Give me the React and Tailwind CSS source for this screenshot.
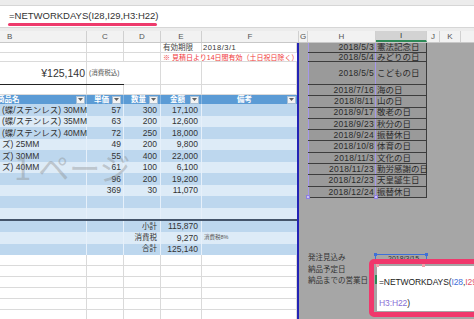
import React from 'react';

const font = "font-['Liberation_Sans','Noto_Sans_CJK_JP',sans-serif]";

const items = [
  ['(蝶/ステンレス) 30MM', '57', '300', '17,100'],
  ['(蝶/ステンレス) 35MM', '63', '200', '12,600'],
  ['(蝶/ステンレス) 40MM', '72', '250', '18,000'],
  ['ズ) 25MM', '49', '200', '9,800'],
  ['ズ) 30MM', '55', '400', '22,000'],
  ['ズ) 40MM', '61', '100', '6,100'],
  ['', '96', '200', '19,200'],
  ['', '369', '30', '11,070'],
  ['', '', '', ''],
  ['', '', '', ''],
];

const holidays = [
  ['2018/7/16', '海の日'],
  ['2018/8/11', '山の日'],
  ['2018/9/17', '敬老の日'],
  ['2018/9/23', '秋分の日'],
  ['2018/9/24', '振替休日'],
  ['2018/10/8', '体育の日'],
  ['2018/11/3', '文化の日'],
  ['2018/11/23', '勤労感謝の日'],
  ['2018/12/23', '天皇誕生日'],
  ['2018/12/24', '振替休日'],
];

function Drop() {
  return (
    <span className="flex h-[8px] w-[9px] shrink-0 items-center justify-center border border-[#a9bfd4] bg-[#f3f3f3]">
      <svg width="5" height="3" viewBox="0 0 5 3">
        <path d="M0 0h5L2.5 3z" fill="#606060" />
      </svg>
    </span>
  );
}

function GridRow({ h, children }) {
  return <div className={`flex ${h}`}>{children}</div>;
}

function Cell({ w, className = '', children }) {
  return (
    <div className={`${w} shrink-0 border-r border-b border-[#dadada] ${className}`}>{children}</div>
  );
}

function HeadCell({ w, label, className = '' }) {
  return (
    <div className={`${w} shrink-0 flex items-center justify-center border-r border-[#d0d0d0] ${className}`}>
      {label}
    </div>
  );
}

export default function App() {
  return (
    <div className={`w-[474px] h-[319px] overflow-hidden bg-white text-[#333] ${font}`}>
      {/* formula bar */}
      <div className="h-[31px] bg-[#ececec] pt-[5px]">
        <div className="h-[23px] bg-white border-y border-[#d6d6d6] pl-[9px] pt-[4px]">
          <div className="text-[9.5px] leading-[12px] text-[#333]">=NETWORKDAYS(I28,I29,H3:H22)</div>
          <div className="mt-[1px] -ml-[1px] h-[3px] w-[149px] rounded-full bg-[#ee3a6c]" />
        </div>
      </div>

      {/* column headers */}
      <div className="flex h-[12px] bg-[#f2f2f2] border-b border-[#c8c8c8] text-[8px] text-[#555]">
        <div className="w-[87px] shrink-0 pl-[7px] flex items-center border-r border-[#d0d0d0]">B</div>
        <HeadCell w="w-[37px]" label="C" />
        <HeadCell w="w-[37px]" label="D" />
        <HeadCell w="w-[41px]" label="E" />
        <HeadCell w="w-[97px]" label="F" />
        <HeadCell w="w-[9px]" label="G" />
        <HeadCell w="w-[68px]" label="H" />
        <HeadCell w="w-[51px]" label="I" className="bg-[#d3d3d3] text-[#333] border-b-2 border-b-[#2e8a57]" />
        <HeadCell w="w-[13px]" label="J" />
        <HeadCell w="w-[21px]" label="K" />
        <div className="flex-1" />
      </div>

      <div className="flex">
        {/* left printable sheet */}
        <div className="relative w-[297px] shrink-0 text-[8.5px] leading-none">
          <GridRow h="h-[10px]">
            <Cell w="w-[87px]" />
            <Cell w="w-[37px]" />
            <Cell w="w-[37px]" />
            <Cell w="w-[41px]" className="pl-[2px] pt-[1px] text-[7.5px] text-[#444]">有効期限</Cell>
            <Cell w="w-[95px]" className="pl-[1px] pt-[1px] text-[7.5px] tracking-[0.5px]">2018/3/1</Cell>
          </GridRow>
          <GridRow h="h-[9px]">
            <Cell w="w-[87px]" />
            <Cell w="w-[37px]" />
            <Cell w="w-[37px]" />
            <div className="w-[136px] shrink-0 border-b border-[#dadada] pl-[2px] text-[7px] leading-[9px] whitespace-nowrap text-[#f03a3a]">
              ※ 見積日より14日間有効（土日祝日除く）
            </div>
          </GridRow>
          <GridRow h="h-[23px]">
            <div className="w-[124px] shrink-0 flex border-b-[1.5px] border-[#222]">
              <div className="w-[87px] shrink-0 border-r border-[#dadada] flex items-center justify-end pr-[1px] text-[10.5px]">
                ¥125,140
              </div>
              <div className="flex items-center pl-[2px] text-[6.5px] whitespace-nowrap text-[#555]">(消費税込)</div>
            </div>
            <Cell w="w-[37px]" />
            <Cell w="w-[41px]" />
            <Cell w="w-[95px]" />
          </GridRow>
          <GridRow h="h-[10px]">
            <Cell w="w-[87px]" />
            <Cell w="w-[37px]" />
            <Cell w="w-[37px]" />
            <Cell w="w-[41px]" />
            <Cell w="w-[95px]" />
          </GridRow>

          {/* table header */}
          <div className="flex h-[9px] bg-[#5b9bd5] text-[7.5px] font-bold text-white">
            <div className="w-[87px] shrink-0 flex items-center pr-[1px] border-r border-[#8ab8e2] overflow-hidden">
              <span className="-ml-[3px]">商品名</span>
              <span className="ml-auto"><Drop /></span>
            </div>
            <div className="w-[37px] shrink-0 flex items-center justify-end gap-[3px] pr-[2px] border-r border-[#8ab8e2]">
              <span>単価</span>
              <Drop />
            </div>
            <div className="w-[37px] shrink-0 flex items-center justify-end gap-[3px] pr-[2px] border-r border-[#8ab8e2]">
              <span>数量</span>
              <Drop />
            </div>
            <div className="w-[41px] shrink-0 flex items-center justify-end gap-[5px] pr-[2px] border-r border-[#8ab8e2]">
              <span>金額</span>
              <Drop />
            </div>
            <div className="w-[95px] shrink-0 flex items-center pr-[1px]">
              <span className="flex-1 text-center">備考</span>
              <Drop />
            </div>
          </div>

          {items.map((r, i) => (
            <div
              key={i}
              className={`flex h-[11.5px] items-center ${i % 2 === 0 ? 'bg-[#bdd7ee]' : 'bg-[#ddebf7]'}`}
            >
              <div className="w-[87px] shrink-0 h-full flex items-center pl-[2px] whitespace-nowrap border-r border-[#e6f0fa]">
                {r[0]}
              </div>
              <div className="w-[37px] shrink-0 h-full flex items-center justify-end pr-[2px] border-r border-[#e6f0fa]">
                {r[1]}
              </div>
              <div className="w-[37px] shrink-0 h-full flex items-center justify-end pr-[3px] border-r border-[#e6f0fa]">
                {r[2]}
              </div>
              <div className="w-[41px] shrink-0 h-full flex items-center justify-end pr-[3px] border-r border-[#e6f0fa]">
                {r[3]}
              </div>
              <div className="w-[95px] shrink-0 h-full" />
            </div>
          ))}

          <div className="h-[2px] bg-[#44546a]" />

          {[
            ['小計', '115,870', '', 'bg-[#bdd7ee]'],
            ['消費税', '9,270', '消費税8%', 'bg-[#ddebf7]'],
            ['合計', '125,140', '', 'bg-[#bdd7ee]'],
          ].map((r, i) => (
            <div key={i} className={`flex h-[11.3px] items-center ${r[3]}`}>
              <div className="w-[87px] shrink-0 h-full border-r border-[#e6f0fa]" />
              <div className="w-[37px] shrink-0 h-full border-r border-[#e6f0fa]" />
              <div className="w-[37px] shrink-0 h-full flex items-center justify-end pr-[3px] text-[7.5px] border-r border-[#e6f0fa]">
                {r[0]}
              </div>
              <div className="w-[41px] shrink-0 h-full flex items-center justify-end pr-[3px] border-r border-[#e6f0fa]">
                {r[1]}
              </div>
              <div className="w-[95px] shrink-0 h-full flex items-center pl-[2px] text-[5.5px] text-[#555]">{r[2]}</div>
            </div>
          ))}

          {[0, 1, 2, 3, 4, 5].map((i) => (
            <GridRow key={i} h="h-[11px]">
              <Cell w="w-[87px]" />
              <Cell w="w-[37px]" />
              <Cell w="w-[37px]" />
              <Cell w="w-[41px]" />
              <Cell w="w-[95px]" />
            </GridRow>
          ))}

          {/* page watermark */}
          <div className="pointer-events-none absolute left-[14px] top-[108px] whitespace-nowrap text-[31px] leading-none text-[#8a8a8a]/40 font-['Noto_Sans_CJK_JP',sans-serif]">
            1 ページ
          </div>
        </div>

        {/* page break line */}
        <div className="w-[2px] shrink-0 bg-[#2323b5]" />

        {/* non-printing area */}
        <div className="relative flex-1 h-[276px] bg-[#a6a6a6] text-[8.5px] leading-none text-[#2a2a2a]">
          <div className="flex">
            <div className="w-[9px] shrink-0" />
            <div className="w-[119px] shrink-0 bg-[#9a9a9a]">
              {[
                ['2018/5/3', '憲法記念日', 'h-[10px]'],
                ['2018/5/4', 'みどりの日', 'h-[9px]'],
                ['2018/5/5', 'こどもの日', 'h-[23px]'],
              ]
                .concat(holidays.map((d) => [d[0], d[1], 'h-[11.3px]']))
                .map((r, i) => (
                  <div key={i} className={`flex ${r[2]} border-b border-[#3c3c3c]`}>
                    <div className="w-[68px] shrink-0 flex items-center justify-end pr-[1px] border-l-[1.5px] border-r-[1.5px] border-[#a597ea] tracking-[0.3px]">
                      {r[0]}
                    </div>
                    <div className="w-[51px] shrink-0 flex items-center pl-[1px] border-r border-[#3c3c3c] whitespace-nowrap">
                      {r[1]}
                    </div>
                  </div>
                ))}
            </div>
          </div>

          {/* range handles */}
          <div className="absolute left-[7px] top-[152px] h-[4px] w-[4px] border border-[#8d7fe0] bg-[#c9c1f2]" />
          <div className="absolute left-[75px] top-[152px] h-[4px] w-[4px] border border-[#8d7fe0] bg-[#c9c1f2]" />

          {/* lower labels */}
          <div className="absolute left-[9px] top-[211px] flex flex-col gap-[4px] text-[7.5px] text-[#333]">
            <span>発注見込み</span>
            <span>納品予定日</span>
            <span>納品までの営業日</span>
          </div>

          {/* I28 reference box */}
          <div className="absolute left-[76px] top-[211px] h-[10px] w-[52px] border border-[#3f6fd8] text-[7px] pl-[12px] text-[#333]">
            2018/3/15
            <span className="absolute -left-[2px] -top-[2px] h-[3px] w-[3px] bg-[#3f6fd8]" />
            <span className="absolute -right-[2px] -top-[2px] h-[3px] w-[3px] bg-[#3f6fd8]" />
          </div>

          {/* edit cell with annotation */}
          <div className="absolute left-[70px] top-[216px] h-[58px] w-[120px] rounded-[5px] border-[5px] border-[#f0386c] bg-[#a6a6a6]">
            <div className="relative ml-[3px] mt-[2px] h-[45px] bg-white pl-[2px] pt-[6px] text-[8.5px] leading-[21px] tracking-[-0.1px] text-[#222] whitespace-nowrap">
              <span className="absolute -left-[2px] top-[9px] h-[9px] w-[2px] bg-[#2e8a57]" />
              <span className="absolute -left-[1px] -top-[2px] h-[3px] w-[3px] bg-[#f2a0a8]" />
              <span className="absolute left-[45px] -top-[2px] h-[3px] w-[3px] bg-[#f2a0a8]" />
              <div>
                =NETWORKDAYS(<span className="text-[#3f6fd8]">I28</span>,<span className="text-[#e0506a]">I29</span>,
              </div>
              <div>
                <span className="text-[#8a70d6]">H3:H22</span>)
              </div>
            </div>
          </div>
        </div>
      </div>
    </div>
  );
}
